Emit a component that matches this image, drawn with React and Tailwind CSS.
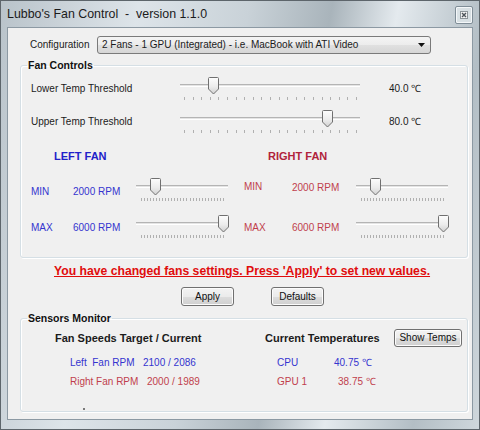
import React from 'react';

const blue = 'text-[#3434cf]';
const red = 'text-[#c03f4d]';

function Thumb() {
    return (
        <svg width="11" height="18" viewBox="0 0 11 18">
            <defs>
                <linearGradient id="thumbFill" x1="0" y1="0" x2="0" y2="1">
                    <stop offset="0" stopColor="#fdfdfd" />
                    <stop offset="0.55" stopColor="#ececec" />
                    <stop offset="1" stopColor="#d0d0d0" />
                </linearGradient>
            </defs>
            <path d="M1.5 .5h8a1 1 0 0 1 1 1V12L5.5 17 .5 12V1.5a1 1 0 0 1 1-1z" fill="url(#thumbFill)" stroke="#707070" />
        </svg>
    );
}

function Slider({ className, thumb, ticks, tickClass }) {
    return (
        <div className={`relative h-[24px] shrink-0 ${className}`}>
            <div className="absolute left-0 right-0 top-[7px] h-[3px] border-t border-[#b4b4b4] border-b border-b-white bg-[#e4e4e4]" />
            <div className="absolute top-0" style={{ left: thumb }}>
                <Thumb />
            </div>
            <div className={`absolute top-[20px] flex h-[3px] justify-between ${tickClass}`}>
                {Array.from({ length: ticks }).map((_, i) => (
                    <span key={i} className="h-[3px] w-px bg-[#b0b0b0]" />
                ))}
            </div>
        </div>
    );
}

function Button({ children, className }) {
    return (
        <button className={`flex items-center justify-center rounded-[3px] border border-[#707070] bg-[linear-gradient(#f3f3f3_0%,#ebebeb_50%,#dddddd_51%,#cfcfcf_100%)] text-[10px] text-[#111] shadow-[inset_0_0_0_1px_#fcfcfc] ${className}`}>
            {children}
        </button>
    );
}

function Group({ title, children, className }) {
    return (
        <fieldset className={`ml-[12px] w-[448px] rounded-[3px] border border-[#d5dfe5] shadow-[1px_1px_0_#ffffff,inset_1px_1px_0_#ffffff] ${className}`}>
            <legend className="ml-[6px] px-[1px] text-[10.5px] font-bold leading-[13px] text-[#111]">{title}</legend>
            {children}
        </fieldset>
    );
}

export default function App() {
    return (
        <div className="flex h-[430px] w-[480px] flex-col overflow-hidden border border-[#5d656b] bg-[linear-gradient(100deg,#b9c3ca_0%,#dde4e9_25%,#c9d2d8_45%,#a9b4bb_60%,#e4eaee_72%,#b3bec5_88%,#cfd7dc_100%)] font-['Liberation_Sans',Arial,sans-serif]">
            {/* title bar */}
            <div className="flex h-[26px] shrink-0 items-center justify-between pl-[6px] pr-[6px]">
                <span className="whitespace-pre text-[12.4px] text-[#1b1b1b]">Lubbo's Fan Control  -  version 1.1.0</span>
                <div className="mt-[1px] flex h-[18px] w-[18px] items-center justify-center rounded-[2px] border border-[#7f8d97] bg-[#e3e9ed]/70 shadow-[inset_0_0_0_1px_#f4f7f9]">
                    <svg width="8" height="8" viewBox="0 0 8 8">
                        <rect x="0.5" y="0.5" width="7" height="7" fill="#f4f4f4" stroke="#8c9499" />
                        <path d="M2 2l4 4M6 2l-4 4" stroke="#4c5359" strokeWidth="1.4" />
                    </svg>
                </div>
            </div>

            {/* client area */}
            <div className="mx-[6px] mb-[9px] flex flex-1 flex-col border border-[#8c99a3] bg-[#f0f0f0] text-[10px] leading-[12px] text-[#1b1b1b]">
                {/* configuration */}
                <div className="mt-[8px] flex h-[18px] items-center pl-[22px]">
                    <span className="w-[67px]">Configuration</span>
                    <div className="flex h-[18px] w-[334px] items-center justify-between rounded-[3px] border border-[#7a7a7a] bg-[linear-gradient(#f4f4f4_0%,#ececec_50%,#e0e0e0_51%,#d6d6d6_100%)] pl-[4px] pr-[5px]">
                        <span>2 Fans - 1 GPU (Integrated) - i.e. MacBook with ATI Video</span>
                        <svg width="7" height="4" viewBox="0 0 7 4">
                            <path d="M0 0h7L3.5 4z" fill="#111" />
                        </svg>
                    </div>
                </div>

                {/* fan controls */}
                <Group title="Fan Controls" className="mt-[5px] pt-[5px] pb-[18px]">
                    <div className="flex h-[33px] items-start">
                        <span className="ml-[10px] mt-[6px] w-[149px]">Lower Temp Threshold</span>
                        <Slider className="w-[180px]" thumb={28} ticks={21} tickClass="left-[4px] w-[173px]" />
                        <span className="ml-[29px] mt-[6px]">40.0 ℃</span>
                    </div>
                    <div className="flex h-[33px] items-start">
                        <span className="ml-[10px] mt-[6px] w-[149px]">Upper Temp Threshold</span>
                        <Slider className="w-[180px]" thumb={142} ticks={21} tickClass="left-[4px] w-[173px]" />
                        <span className="ml-[29px] mt-[6px]">80.0 ℃</span>
                    </div>

                    <div className="mt-[7px] flex h-[13px] items-center text-[11px] font-bold leading-[13px]">
                        <span className="ml-[33px] w-[214px] text-[#2121c9]">LEFT FAN</span>
                        <span className="text-[#b1233b]">RIGHT FAN</span>
                    </div>

                    <div className="mt-[15px] flex h-[37px] items-start">
                        <span className={`ml-[10px] mt-[8px] w-[42px] ${blue}`}>MIN</span>
                        <span className={`mt-[8px] w-[63px] ${blue}`}>2000 RPM</span>
                        <Slider className="w-[92px]" thumb={14} ticks={28} tickClass="left-[5px] w-[83px]" />
                        <span className={`ml-[16px] mt-[3px] w-[48px] ${red}`}>MIN</span>
                        <span className={`mt-[4px] w-[64px] ${red}`}>2000 RPM</span>
                        <Slider className="w-[92px]" thumb={14} ticks={28} tickClass="left-[5px] w-[83px]" />
                    </div>
                    <div className="flex h-[24px] items-start">
                        <span className={`ml-[10px] mt-[7px] w-[42px] ${blue}`}>MAX</span>
                        <span className={`mt-[7px] w-[63px] ${blue}`}>6000 RPM</span>
                        <Slider className="w-[92px]" thumb={82} ticks={28} tickClass="left-[5px] w-[83px]" />
                        <span className={`ml-[16px] mt-[7px] w-[48px] ${red}`}>MAX</span>
                        <span className={`mt-[7px] w-[64px] ${red}`}>6000 RPM</span>
                        <Slider className="w-[92px]" thumb={82} ticks={28} tickClass="left-[5px] w-[83px]" />
                    </div>
                </Group>

                {/* warning */}
                <div className="mt-[7px] pl-[46px] text-[12.2px] font-bold leading-[13px] whitespace-nowrap text-[#e00d0d] underline decoration-[#e00d0d]">
                    You have changed fans settings. Press 'Apply' to set new values.
                </div>

                {/* buttons */}
                <div className="mt-[9px] flex h-[19px]">
                    <Button className="ml-[173px] h-[19px] w-[53px]">Apply</Button>
                    <Button className="ml-[37px] h-[19px] w-[53px]">Defaults</Button>
                </div>

                {/* sensors */}
                <Group title="Sensors Monitor" className="mt-[6px] pt-[4px] pb-[1px]">
                    <div className="flex h-[18px] items-center text-[11px] font-bold">
                        <span className="ml-[34px] w-[210px]">Fan Speeds Target / Current</span>
                        <span className="w-[129px]">Current Temperatures</span>
                        <Button className="h-[18px] w-[68px] font-normal">Show Temps</Button>
                    </div>
                    <div className="mt-[6px] flex h-[19px] items-center">
                        <span className={`ml-[49px] w-[73px] whitespace-pre ${blue}`}>Left  Fan RPM</span>
                        <span className={`w-[134px] ${blue}`}>2100 / 2086</span>
                        <span className={`w-[57px] ${blue}`}>CPU</span>
                        <span className={blue}>40.75 ℃</span>
                    </div>
                    <div className="flex h-[19px] items-center">
                        <span className={`ml-[49px] w-[77px] ${red}`}>Right Fan RPM</span>
                        <span className={`w-[130px] ${red}`}>2000 / 1989</span>
                        <span className={`w-[61px] ${red}`}>GPU 1</span>
                        <span className={red}>38.75 ℃</span>
                    </div>
                    <div className="ml-[62px] mt-[17px] h-[2px] w-[2px] bg-[#7a7a7a]" />
                </Group>
            </div>
        </div>
    );
}
